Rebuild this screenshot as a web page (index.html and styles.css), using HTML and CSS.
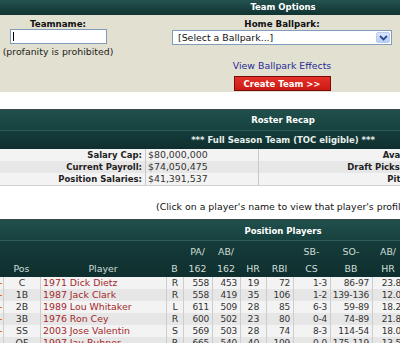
FILE: index.html
```html
<!DOCTYPE html>
<html>
<head>
<meta charset="utf-8">
<link rel="stylesheet" href="styles.css">
</head>
<body>
<div class="page">
  <section class="options">
    <div class="bar bar-top">Team Options</div>
    <div class="opt-panel">
      <div class="opt-col">
        <div class="lbl">Teamname:</div>
        <span class="input-wrap"><input class="txt" type="text"></span>
        <div class="note">(profanity is prohibited)</div>
      </div>
      <div class="opt-col">
        <div class="lbl">Home Ballpark:</div>
        <div class="select">
          <span class="sel-text">[Select a Ballpark...]</span>
          <span class="sel-btn"><svg width="9" height="6" viewBox="0 0 9 6"><path d="M1 1 L4.5 4.5 L8 1" fill="none" stroke="#2c4a8c" stroke-width="1.8"/></svg></span>
        </div>
        <a class="effects" href="#">View Ballpark Effects</a>
        <button class="create">Create Team &gt;&gt;</button>
      </div>
      <div class="opt-col"></div>
    </div>
  </section>

  <section class="recap">
    <div class="bar bar-main">Roster Recap</div>
    <div class="bar-sub">*** Full Season Team (TOC eligible) ***</div>
    <div class="recap-row">
      <div class="rl">Salary Cap:</div><div class="rv">$80,000,000</div><div class="rl2">Available:</div><div class="rv2"></div>
    </div>
    <div class="recap-row alt">
      <div class="rl">Current Payroll:</div><div class="rv">$74,050,475</div><div class="rl2">Draft Picks Used:</div><div class="rv2"></div>
    </div>
    <div class="recap-row">
      <div class="rl">Position Salaries:</div><div class="rv">$41,391,537</div><div class="rl2">Pitchers:</div><div class="rv2"></div>
    </div>
  </section>

  <p class="hint">(Click on a player's name to view that player's profile)</p>

  <section class="players">
    <div class="bar bar-main">Position Players</div>
    <div class="thead">
      <div class="prow hrow">
        <div></div><div>Pos</div><div>Player</div><div>B</div>
        <div>PA/<br>162</div><div>AB/<br>162</div><div>HR</div><div>RBI</div>
        <div>SB-<br>CS</div><div>SO-<br>BB</div><div>AB/<br>HR</div><div></div>
      </div>
    </div>
    <div class="prow drow"><div class="m"></div><div class="c">C</div><div class="nm"><a href="#">1971 Dick Dietz</a></div><div class="c">R</div><div class="n">558</div><div class="n">453</div><div class="c">19</div><div class="n">72</div><div class="n">1-3</div><div class="n">86-97</div><div class="n">23.8</div><div></div></div>
    <div class="prow drow alt"><div class="m"></div><div class="c">1B</div><div class="nm"><a href="#">1987 Jack Clark</a></div><div class="c">R</div><div class="n">558</div><div class="n">419</div><div class="c">35</div><div class="n">106</div><div class="n">1-2</div><div class="n">139-136</div><div class="n">12.0</div><div></div></div>
    <div class="prow drow"><div class="m"></div><div class="c">2B</div><div class="nm"><a href="#">1989 Lou Whitaker</a></div><div class="c">L</div><div class="n">611</div><div class="n">509</div><div class="c">28</div><div class="n">85</div><div class="n">6-3</div><div class="n">59-89</div><div class="n">18.2</div><div></div></div>
    <div class="prow drow alt"><div class="m"></div><div class="c">3B</div><div class="nm"><a href="#">1976 Ron Cey</a></div><div class="c">R</div><div class="n">600</div><div class="n">502</div><div class="c">23</div><div class="n">80</div><div class="n">0-4</div><div class="n">74-89</div><div class="n">21.8</div><div></div></div>
    <div class="prow drow"><div class="m"></div><div class="c">SS</div><div class="nm"><a href="#">2003 Jose Valentin</a></div><div class="c">S</div><div class="n">569</div><div class="n">503</div><div class="c">28</div><div class="n">74</div><div class="n">8-3</div><div class="n">114-54</div><div class="n">18.0</div><div></div></div>
    <div class="prow drow alt"><div class="m"></div><div class="c">OF</div><div class="nm"><a href="#">1997 Jay Buhner</a></div><div class="c">R</div><div class="n">665</div><div class="n">540</div><div class="c">40</div><div class="n">109</div><div class="n">0-0</div><div class="n">175-119</div><div class="n">13.5</div><div></div></div>
  </section>
</div>
</body>
</html>
```
FILE: styles.css
```css
html, body {
  margin: 0;
  padding: 0;
  overflow: hidden;
  background: #fff;
}
body {
  font-family: "DejaVu Sans", Verdana, sans-serif;
  font-size: 9.4px;
  color: #333;
}
.page {
  width: 566px;
}
.bar {
  color: #fff;
  font-weight: bold;
  font-size: 8.5px;
  text-align: center;
}
.bar-top {
  height: 15px;
  line-height: 14px;
  background: linear-gradient(#24524f, #0f3331);
}
.opt-panel {
  background: #e2e1d1;
  display: grid;
  grid-template-columns: 116px 332px 1fr;
  padding: 5px 0 1px;
  height: 71px;
}
.opt-col {
  display: flex;
  flex-direction: column;
  align-items: center;
}
.lbl {
  font-weight: bold;
  font-size: 8.7px;
  color: #111;
  line-height: 9px;
  height: 9px;
}
.input-wrap {
  position: relative;
  display: block;
}
.input-wrap::after {
  content: "";
  position: absolute;
  left: 3px;
  top: 3px;
  width: 1px;
  height: 9px;
  background: #000;
}
.txt {
  display: block;
  box-sizing: border-box;
  width: 97px;
  height: 15px;
  border: 1px solid #7f9db9;
  background: #fff;
  padding: 0;
  margin: 0;
}
.note {
  margin-top: 2px;
  line-height: 11px;
  color: #222;
}
.select {
  box-sizing: border-box;
  margin-top: 1px;
  width: 220px;
  height: 15px;
  border: 1px solid #7f9db9;
  background: #fff;
  display: flex;
  align-items: center;
  justify-content: space-between;
  padding: 0 1px 0 5px;
  color: #111;
}
.sel-text {
  line-height: 13px;
}
.sel-btn {
  width: 14px;
  height: 11px;
  background: linear-gradient(#dbe6fd, #b8ccf5);
  border: 1px solid #b9cbee;
  box-sizing: border-box;
  border-radius: 2px;
  display: flex;
  align-items: center;
  justify-content: center;
}
.effects {
  margin-top: 15px;
  line-height: 11px;
  color: #262a96;
  text-decoration: none;
}
.create {
  margin-top: 5px;
  box-sizing: border-box;
  width: 97px;
  height: 15px;
  padding: 0;
  border: 1px solid #7a0a08;
  background: linear-gradient(#e4322a, #cc1a14);
  color: #fff;
  font-family: "DejaVu Sans", Verdana, sans-serif;
  font-weight: bold;
  font-size: 8.5px;
  line-height: 12px;
}
.recap {
  margin-top: 17px;
  border-top: 1px solid #3c4848;
}
.bar-main {
  height: 20px;
  line-height: 20px;
  background: linear-gradient(#21504c, #16413e);
}
.bar-sub {
  height: 19px;
  line-height: 19px;
  box-sizing: border-box;
  border-top: 1px solid #2f5c58;
  background: linear-gradient(#153c3a, #0f2f2e);
  color: #e8f0ee;
  font-weight: bold;
  font-size: 8.5px;
  text-align: center;
}
.recap-row {
  display: grid;
  grid-template-columns: 146px 113px 176px 1fr;
  height: 12px;
  line-height: 12px;
  background: #f3f3f3;
}
.recap-row.alt {
  background: #e7e7e7;
}
.recap-row:last-child {
  border-bottom: 1px solid #cfcfcf;
}
.rl, .rl2 {
  font-weight: bold;
  font-size: 8.5px;
  text-align: right;
  color: #222;
  border-right: 1px solid #c9c9c9;
  white-space: nowrap;
}
.rl {
  padding-right: 3px;
}
.rl2 {
  padding-right: 4px;
}
.rv {
  padding-left: 2px;
  border-right: 1px solid #c9c9c9;
}
.hint {
  margin: 15px 0 7px;
  line-height: 11px;
  text-align: center;
  color: #111;
  white-space: nowrap;
}
.players {
  border-top: 1px solid #3c4848;
}
.players .bar-main {
  height: 20px;
  line-height: 22px;
}
.thead {
  border-top: 1px solid #2f5c58;
  background: linear-gradient(#153c3a, #0f2f2e);
  color: #cfdeda;
}
.prow {
  display: grid;
  grid-template-columns: 3px 37px 126px 17px 29px 28px 26px 27px 37px 42px 32px 1fr;
}
.prow > div {
  box-sizing: border-box;
  white-space: nowrap;
}
.hrow {
  height: 36px;
  line-height: 17px;
  text-align: center;
}
.hrow > div {
  display: flex;
  flex-direction: column;
  justify-content: flex-end;
}
.drow {
  height: 12px;
  line-height: 12px;
  background: #f3f3f3;
}
.drow.alt {
  background: #e6e6e6;
}
.drow > div + div {
  border-left: 1px solid #cdcdcd;
}
.drow .m {
  position: relative;
}
.drow .m::after {
  content: "";
  position: absolute;
  left: 0;
  top: 6px;
  width: 2px;
  height: 1px;
  background: #e8682c;
}
.c {
  text-align: center;
}
.n {
  text-align: right;
  padding-right: 3px;
  font-size: 9px;
  letter-spacing: -0.2px;
}
.nm {
  padding-left: 2px;
}
.nm a {
  color: #a3262a;
  text-decoration: none;
}
```
